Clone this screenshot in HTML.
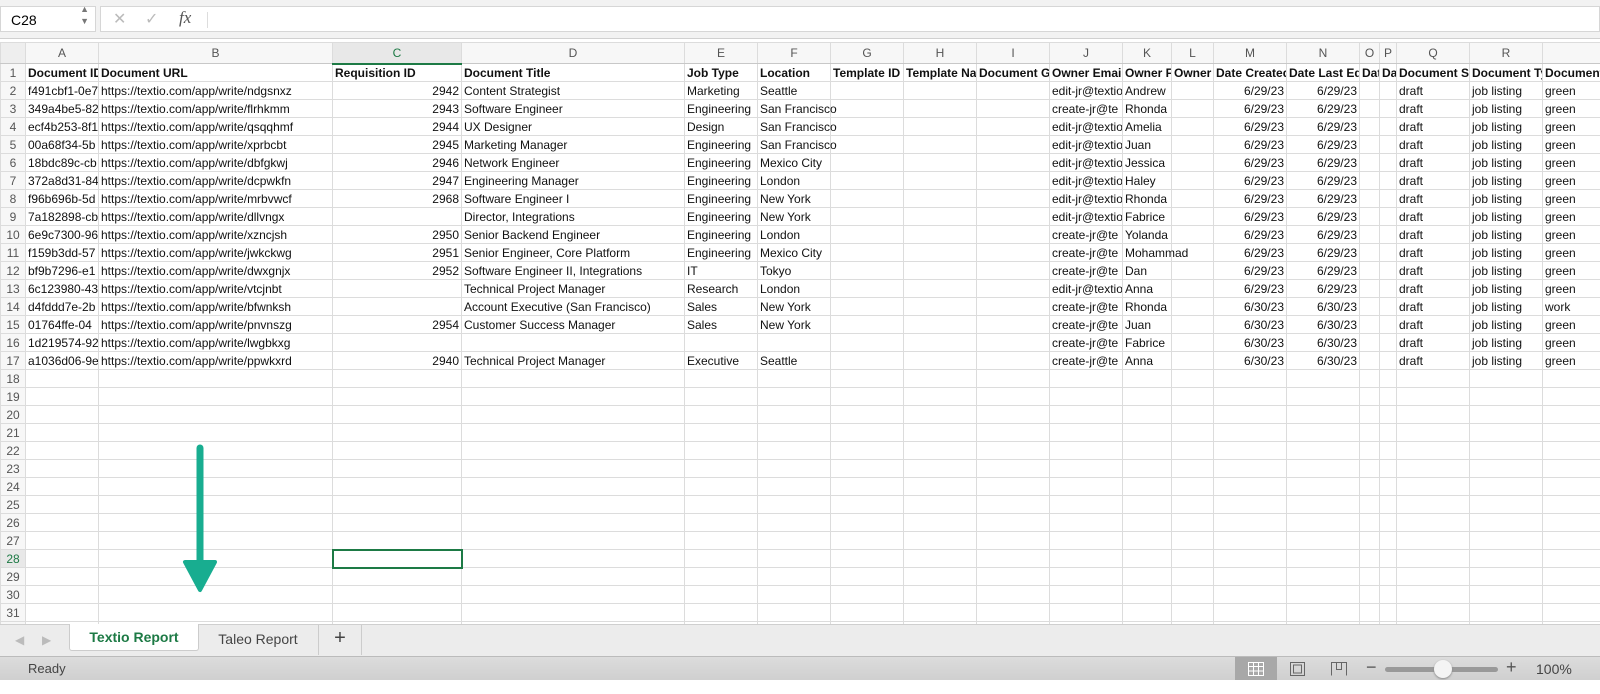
<!DOCTYPE html>
<html><head><meta charset="utf-8"><style>
body{margin:0;width:1600px;height:694px;overflow:hidden;background:#fff;font-family:"Liberation Sans",Arial,sans-serif;position:relative}
.fb{position:absolute;left:0;top:0;width:1600px;height:38px;background:#f2f2f2;border-bottom:1px solid #d0d0d0}
.nb{position:absolute;left:0;top:6px;width:96px;height:26px;background:#fff;border:1px solid #d6d6d6;font-size:14px;line-height:26px;padding-left:10px;box-sizing:border-box}
.fx{position:absolute;left:100px;top:6px;width:1500px;height:26px;background:#fff;border:1px solid #d6d6d6;box-sizing:border-box}
table{position:absolute;left:0;top:42px;width:1602px;border-collapse:collapse;table-layout:fixed;font-size:12px}
td{height:18px;box-sizing:border-box;border:1px solid #dcdcdc;padding:0 2px;white-space:nowrap;overflow:hidden;line-height:16px;color:#111}
tr.h td{height:21px;background:#f7f7f7;text-align:center;color:#555;border-bottom:1px solid #c8c8c8}
td.r{background:#f7f7f7;text-align:center;color:#555;padding:0}
tr.b td{font-weight:bold}
.n{text-align:right}
.tabs{position:absolute;left:0;top:624px;width:1600px;height:32px;background:#ececec;border-top:1px solid #cfcfcf}
.status{position:absolute;left:0;top:656px;width:1600px;height:24px;background:linear-gradient(#dcdcdc,#cfcfcf);border-top:1px solid #bbb;font-size:13px;color:#444}
.bot{position:absolute;left:0;top:680px;width:1600px;height:14px;background:#fff}
</style></head><body>
<div class="fb"><div class="nb">C28<span style="position:absolute;right:6px;top:-4px;font-size:9px;color:#777;line-height:12px">▲<br>▼</span></div>
<div class="fx"><span style="position:absolute;left:12px;top:2px;color:#bbb;font-size:16px">✕</span><span style="position:absolute;left:44px;top:2px;color:#bbb;font-size:16px">✓</span><span style="position:absolute;left:78px;top:1px;color:#555;font-size:17px;font-style:italic;font-family:'Liberation Serif',serif">fx</span><span style="position:absolute;left:106px;top:5px;height:16px;border-left:1px solid #ddd"></span></div></div>
<table>
<colgroup><col style="width:25px"><col style="width:73px"><col style="width:234px"><col style="width:129px"><col style="width:223px"><col style="width:73px"><col style="width:73px"><col style="width:73px"><col style="width:73px"><col style="width:73px"><col style="width:73px"><col style="width:49px"><col style="width:42px"><col style="width:73px"><col style="width:73px"><col style="width:20px"><col style="width:17px"><col style="width:73px"><col style="width:73px"><col style="width:60px"></colgroup>
<tr class="h"><td style="background:#eee"></td><td>A</td><td>B</td><td style="color:#1d7a45;border-bottom:2px solid #1d7a45;background:#e8e8e8">C</td><td>D</td><td>E</td><td>F</td><td>G</td><td>H</td><td>I</td><td>J</td><td>K</td><td>L</td><td>M</td><td>N</td><td>O</td><td>P</td><td>Q</td><td>R</td><td></td></tr>
<tr class="b"><td class="r" style="font-weight:normal">1</td><td>Document ID</td><td>Document URL</td><td>Requisition ID</td><td>Document Title</td><td>Job Type</td><td>Location</td><td>Template ID</td><td>Template Name</td><td>Document Group</td><td>Owner Email</td><td>Owner First</td><td>Owner</td><td>Date Created</td><td>Date Last Edited</td><td>Date</td><td>Date</td><td>Document Status</td><td>Document Type</td><td>Document</td></tr>
<tr><td class="r">2</td><td>f491cbf1-0e7</td><td>https://textio.com/app/write/ndgsnxz</td><td class="n">2942</td><td>Content Strategist</td><td>Marketing</td><td>Seattle</td><td></td><td></td><td></td><td>edit-jr@textio</td><td>Andrew</td><td></td><td class="n">6/29/23</td><td class="n">6/29/23</td><td></td><td></td><td>draft</td><td>job listing</td><td>green</td></tr>
<tr><td class="r">3</td><td>349a4be5-82</td><td>https://textio.com/app/write/flrhkmm</td><td class="n">2943</td><td>Software Engineer</td><td>Engineering</td><td style="overflow:visible">San Francisco</td><td></td><td></td><td></td><td>create-jr@te</td><td>Rhonda</td><td></td><td class="n">6/29/23</td><td class="n">6/29/23</td><td></td><td></td><td>draft</td><td>job listing</td><td>green</td></tr>
<tr><td class="r">4</td><td>ecf4b253-8f1</td><td>https://textio.com/app/write/qsqqhmf</td><td class="n">2944</td><td>UX Designer</td><td>Design</td><td style="overflow:visible">San Francisco</td><td></td><td></td><td></td><td>edit-jr@textio</td><td>Amelia</td><td></td><td class="n">6/29/23</td><td class="n">6/29/23</td><td></td><td></td><td>draft</td><td>job listing</td><td>green</td></tr>
<tr><td class="r">5</td><td>00a68f34-5b</td><td>https://textio.com/app/write/xprbcbt</td><td class="n">2945</td><td>Marketing Manager</td><td>Engineering</td><td style="overflow:visible">San Francisco</td><td></td><td></td><td></td><td>edit-jr@textio</td><td>Juan</td><td></td><td class="n">6/29/23</td><td class="n">6/29/23</td><td></td><td></td><td>draft</td><td>job listing</td><td>green</td></tr>
<tr><td class="r">6</td><td>18bdc89c-cb</td><td>https://textio.com/app/write/dbfgkwj</td><td class="n">2946</td><td>Network Engineer</td><td>Engineering</td><td>Mexico City</td><td></td><td></td><td></td><td>edit-jr@textio</td><td>Jessica</td><td></td><td class="n">6/29/23</td><td class="n">6/29/23</td><td></td><td></td><td>draft</td><td>job listing</td><td>green</td></tr>
<tr><td class="r">7</td><td>372a8d31-84</td><td>https://textio.com/app/write/dcpwkfn</td><td class="n">2947</td><td>Engineering Manager</td><td>Engineering</td><td>London</td><td></td><td></td><td></td><td>edit-jr@textio</td><td>Haley</td><td></td><td class="n">6/29/23</td><td class="n">6/29/23</td><td></td><td></td><td>draft</td><td>job listing</td><td>green</td></tr>
<tr><td class="r">8</td><td>f96b696b-5d</td><td>https://textio.com/app/write/mrbvwcf</td><td class="n">2968</td><td>Software Engineer I</td><td>Engineering</td><td>New York</td><td></td><td></td><td></td><td>edit-jr@textio</td><td>Rhonda</td><td></td><td class="n">6/29/23</td><td class="n">6/29/23</td><td></td><td></td><td>draft</td><td>job listing</td><td>green</td></tr>
<tr><td class="r">9</td><td>7a182898-cb</td><td>https://textio.com/app/write/dllvngx</td><td class="n"></td><td>Director, Integrations</td><td>Engineering</td><td>New York</td><td></td><td></td><td></td><td>edit-jr@textio</td><td>Fabrice</td><td></td><td class="n">6/29/23</td><td class="n">6/29/23</td><td></td><td></td><td>draft</td><td>job listing</td><td>green</td></tr>
<tr><td class="r">10</td><td>6e9c7300-96</td><td>https://textio.com/app/write/xzncjsh</td><td class="n">2950</td><td>Senior Backend Engineer</td><td>Engineering</td><td>London</td><td></td><td></td><td></td><td>create-jr@te</td><td>Yolanda</td><td></td><td class="n">6/29/23</td><td class="n">6/29/23</td><td></td><td></td><td>draft</td><td>job listing</td><td>green</td></tr>
<tr><td class="r">11</td><td>f159b3dd-57</td><td>https://textio.com/app/write/jwkckwg</td><td class="n">2951</td><td>Senior Engineer, Core Platform</td><td>Engineering</td><td>Mexico City</td><td></td><td></td><td></td><td>create-jr@te</td><td style="overflow:visible">Mohammad</td><td></td><td class="n">6/29/23</td><td class="n">6/29/23</td><td></td><td></td><td>draft</td><td>job listing</td><td>green</td></tr>
<tr><td class="r">12</td><td>bf9b7296-e1</td><td>https://textio.com/app/write/dwxgnjx</td><td class="n">2952</td><td>Software Engineer II, Integrations</td><td>IT</td><td>Tokyo</td><td></td><td></td><td></td><td>create-jr@te</td><td>Dan</td><td></td><td class="n">6/29/23</td><td class="n">6/29/23</td><td></td><td></td><td>draft</td><td>job listing</td><td>green</td></tr>
<tr><td class="r">13</td><td>6c123980-43</td><td>https://textio.com/app/write/vtcjnbt</td><td class="n"></td><td>Technical Project Manager</td><td>Research</td><td>London</td><td></td><td></td><td></td><td>edit-jr@textio</td><td>Anna</td><td></td><td class="n">6/29/23</td><td class="n">6/29/23</td><td></td><td></td><td>draft</td><td>job listing</td><td>green</td></tr>
<tr><td class="r">14</td><td>d4fddd7e-2b</td><td>https://textio.com/app/write/bfwnksh</td><td class="n"></td><td>Account Executive (San Francisco)</td><td>Sales</td><td>New York</td><td></td><td></td><td></td><td>create-jr@te</td><td>Rhonda</td><td></td><td class="n">6/30/23</td><td class="n">6/30/23</td><td></td><td></td><td>draft</td><td>job listing</td><td>work</td></tr>
<tr><td class="r">15</td><td>01764ffe-04</td><td>https://textio.com/app/write/pnvnszg</td><td class="n">2954</td><td>Customer Success Manager</td><td>Sales</td><td>New York</td><td></td><td></td><td></td><td>create-jr@te</td><td>Juan</td><td></td><td class="n">6/30/23</td><td class="n">6/30/23</td><td></td><td></td><td>draft</td><td>job listing</td><td>green</td></tr>
<tr><td class="r">16</td><td>1d219574-92</td><td>https://textio.com/app/write/lwgbkxg</td><td class="n"></td><td></td><td></td><td></td><td></td><td></td><td></td><td>create-jr@te</td><td>Fabrice</td><td></td><td class="n">6/30/23</td><td class="n">6/30/23</td><td></td><td></td><td>draft</td><td>job listing</td><td>green</td></tr>
<tr><td class="r">17</td><td>a1036d06-9e</td><td>https://textio.com/app/write/ppwkxrd</td><td class="n">2940</td><td>Technical Project Manager</td><td>Executive</td><td>Seattle</td><td></td><td></td><td></td><td>create-jr@te</td><td>Anna</td><td></td><td class="n">6/30/23</td><td class="n">6/30/23</td><td></td><td></td><td>draft</td><td>job listing</td><td>green</td></tr>
<tr><td class="r">18</td><td></td><td></td><td></td><td></td><td></td><td></td><td></td><td></td><td></td><td></td><td></td><td></td><td></td><td></td><td></td><td></td><td></td><td></td><td></td></tr>
<tr><td class="r">19</td><td></td><td></td><td></td><td></td><td></td><td></td><td></td><td></td><td></td><td></td><td></td><td></td><td></td><td></td><td></td><td></td><td></td><td></td><td></td></tr>
<tr><td class="r">20</td><td></td><td></td><td></td><td></td><td></td><td></td><td></td><td></td><td></td><td></td><td></td><td></td><td></td><td></td><td></td><td></td><td></td><td></td><td></td></tr>
<tr><td class="r">21</td><td></td><td></td><td></td><td></td><td></td><td></td><td></td><td></td><td></td><td></td><td></td><td></td><td></td><td></td><td></td><td></td><td></td><td></td><td></td></tr>
<tr><td class="r">22</td><td></td><td></td><td></td><td></td><td></td><td></td><td></td><td></td><td></td><td></td><td></td><td></td><td></td><td></td><td></td><td></td><td></td><td></td><td></td></tr>
<tr><td class="r">23</td><td></td><td></td><td></td><td></td><td></td><td></td><td></td><td></td><td></td><td></td><td></td><td></td><td></td><td></td><td></td><td></td><td></td><td></td><td></td></tr>
<tr><td class="r">24</td><td></td><td></td><td></td><td></td><td></td><td></td><td></td><td></td><td></td><td></td><td></td><td></td><td></td><td></td><td></td><td></td><td></td><td></td><td></td></tr>
<tr><td class="r">25</td><td></td><td></td><td></td><td></td><td></td><td></td><td></td><td></td><td></td><td></td><td></td><td></td><td></td><td></td><td></td><td></td><td></td><td></td><td></td></tr>
<tr><td class="r">26</td><td></td><td></td><td></td><td></td><td></td><td></td><td></td><td></td><td></td><td></td><td></td><td></td><td></td><td></td><td></td><td></td><td></td><td></td><td></td></tr>
<tr><td class="r">27</td><td></td><td></td><td></td><td></td><td></td><td></td><td></td><td></td><td></td><td></td><td></td><td></td><td></td><td></td><td></td><td></td><td></td><td></td><td></td></tr>
<tr><td class="r" style="color:#1d7a45;background:#e8e8e8">28</td><td></td><td></td><td style="outline:2px solid #1d7a45;outline-offset:-1px"></td><td></td><td></td><td></td><td></td><td></td><td></td><td></td><td></td><td></td><td></td><td></td><td></td><td></td><td></td><td></td><td></td></tr>
<tr><td class="r">29</td><td></td><td></td><td></td><td></td><td></td><td></td><td></td><td></td><td></td><td></td><td></td><td></td><td></td><td></td><td></td><td></td><td></td><td></td><td></td></tr>
<tr><td class="r">30</td><td></td><td></td><td></td><td></td><td></td><td></td><td></td><td></td><td></td><td></td><td></td><td></td><td></td><td></td><td></td><td></td><td></td><td></td><td></td></tr>
<tr><td class="r">31</td><td></td><td></td><td></td><td></td><td></td><td></td><td></td><td></td><td></td><td></td><td></td><td></td><td></td><td></td><td></td><td></td><td></td><td></td><td></td></tr>
<tr><td class="r">32</td><td></td><td></td><td></td><td></td><td></td><td></td><td></td><td></td><td></td><td></td><td></td><td></td><td></td><td></td><td></td><td></td><td></td><td></td><td></td></tr>
</table>
<svg style="position:absolute;left:180px;top:440px" width="44" height="156"><line x1="20" y1="8" x2="20" y2="130" stroke="#18ad90" stroke-width="7" stroke-linecap="round"/><path d="M5 122 L35 122 L20 150 Z" fill="#18ad90" stroke="#18ad90" stroke-width="4" stroke-linejoin="round"/></svg>
<div class="tabs">
<span style="position:absolute;left:15px;top:8px;color:#bbb;font-size:12px">◀</span><span style="position:absolute;left:42px;top:8px;color:#bbb;font-size:12px">▶</span>
<div style="position:absolute;left:69px;top:-1px;width:128px;height:26px;background:#fff;border:1px solid #ccc;border-top:none;border-radius:0 0 3px 3px;text-align:center;line-height:27px;font-size:14px;font-weight:bold;color:#1d7a45">Textio Report</div>
<div style="position:absolute;left:198px;top:0;width:120px;height:30px;text-align:center;line-height:28px;font-size:14px;color:#444;border-right:1px solid #ccc">Taleo Report</div>
<div style="position:absolute;left:319px;top:0;width:42px;height:30px;text-align:center;line-height:27px;font-size:20px;color:#444;border-right:1px solid #ccc">+</div>
</div>
<div class="status"><span style="position:absolute;left:28px;top:4px">Ready</span>
<div style="position:absolute;left:1235px;top:0;width:42px;height:24px;background:#a8a8a8"></div>
<svg style="position:absolute;left:1247px;top:4px" width="18" height="16"><g stroke="#fff" stroke-width="1" fill="none"><rect x="1.5" y="1.5" width="15" height="13"/><line x1="6.5" y1="1" x2="6.5" y2="15"/><line x1="11.5" y1="1" x2="11.5" y2="15"/><line x1="1" y1="5.5" x2="17" y2="5.5"/><line x1="1" y1="10" x2="17" y2="10"/></g></svg>
<svg style="position:absolute;left:1289px;top:4px" width="18" height="16"><rect x="1.5" y="1.5" width="14" height="13" fill="none" stroke="#666"/><rect x="4.5" y="4" width="8" height="8" fill="none" stroke="#666"/></svg>
<svg style="position:absolute;left:1330px;top:4px" width="18" height="16"><path d="M1.5 14.5V1.5H16.5V14.5M6.5 1.5V8.5H11.5V1.5" fill="none" stroke="#666"/></svg>
<span style="position:absolute;left:1366px;top:0px;font-size:18px;color:#555">−</span>
<div style="position:absolute;left:1385px;top:10px;width:113px;height:5px;background:#999;border-radius:3px"></div>
<div style="position:absolute;left:1434px;top:3px;width:18px;height:18px;background:#f4f4f4;border-radius:50%;box-shadow:0 1px 2px #888"></div>
<span style="position:absolute;left:1506px;top:0px;font-size:18px;color:#555">+</span>
<span style="position:absolute;left:1536px;top:4px;font-size:14px;color:#444">100%</span>
</div>
<div class="bot"></div>
</body></html>
